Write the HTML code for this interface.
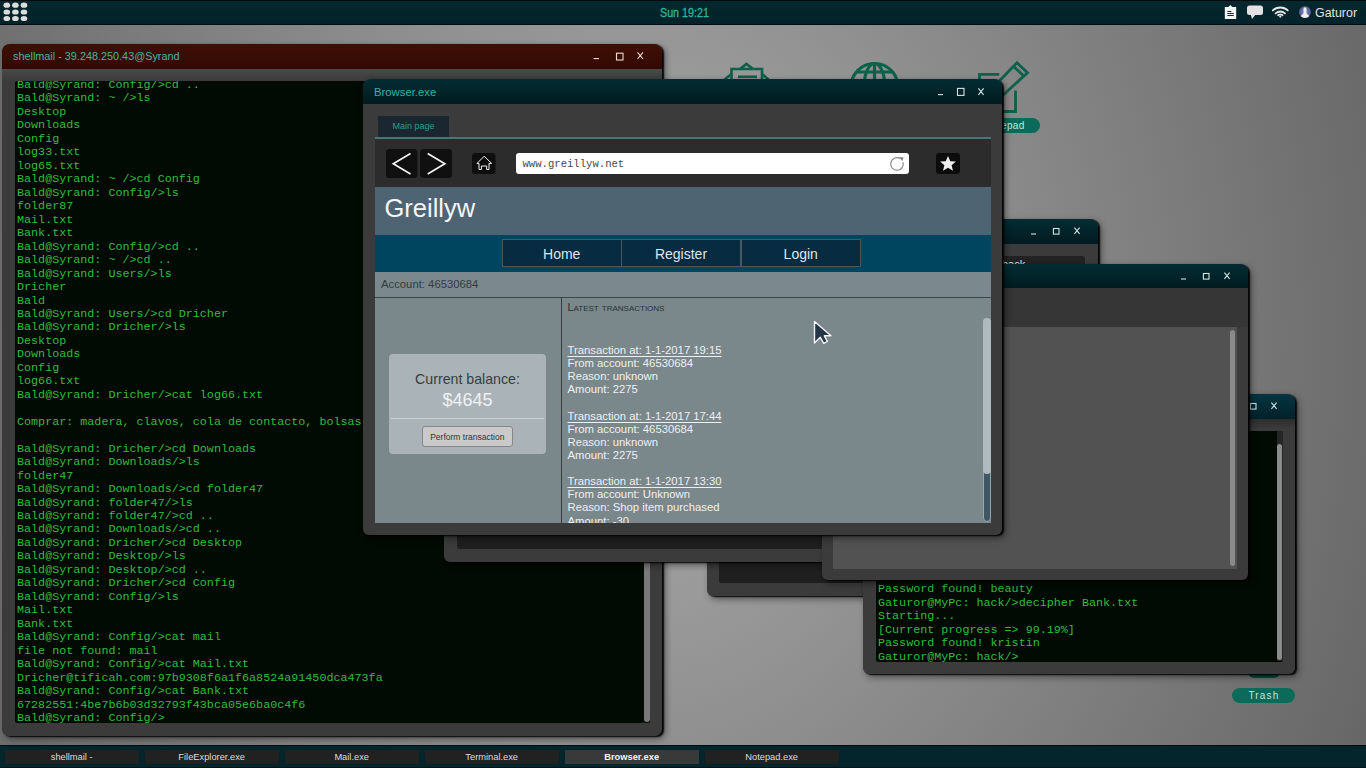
<!DOCTYPE html>
<html><head><meta charset="utf-8">
<style>
*{margin:0;padding:0;box-sizing:border-box}
html,body{width:1366px;height:768px;overflow:hidden}
body{position:relative;font-family:"Liberation Sans",sans-serif;
background:radial-gradient(800px 1000px at 640px 340px,#acacac 0%,#666666 100%)}
.abs{position:absolute}
#topbar{left:0;top:0;width:1366px;height:25px;background:linear-gradient(#03282e,#022329);border-top:1px solid #000a0d;border-bottom:1px solid #000d10}
#taskbar{left:0;top:744.5px;width:1366px;height:23.5px;background:#03252b;border-top:1px solid #000c10;border-bottom:1px solid #001418}
.tb{position:absolute;top:4.3px;width:134px;height:14.2px;background:#212121;color:#dcdcdc;font-size:9.3px;line-height:15px;text-align:center}
.tb.act{background:#393939;font-weight:bold;color:#f4f4f4}
.win{position:absolute;background:#3b3b3b;border-radius:8px 8px 6px 6px;box-shadow:2px 1px 1.5px rgba(0,0,0,.95),3px 3px 7px rgba(0,0,0,.45)}
.title{position:absolute;left:0;top:0;right:0;height:25px;border-radius:8px 8px 0 0;background:linear-gradient(#042c33,#021b1f)}
.title.red{background:linear-gradient(#3f0f05,#320a03)}
.ttext{position:absolute;left:11px;top:6px;font-size:11px;color:#3fb5a5;white-space:pre}
.ctl{position:absolute;top:0;right:0;width:72px;height:25px}
.term{position:absolute;background:#010a03;overflow:hidden;border-radius:2px}
.term pre{position:absolute;left:2px;font-family:"Liberation Mono",monospace;font-size:11.73px;line-height:13.47px;color:#30be3c;white-space:pre}
.icon{position:absolute}
.nav{background:#072b40;border:1px solid #4a585c;color:#dfe6ea;font-size:14px;line-height:28px;text-align:center}
.tx{font-size:11.3px;line-height:13.12px;color:#eef0f2;white-space:pre}
.tx u{text-decoration-thickness:1px;text-underline-offset:2px}
</style></head><body>

<!-- desktop icons -->
<svg class="icon" style="left:715px;top:58px" width="62" height="24" viewBox="0 0 62 24">
 <g fill="none" stroke="#0b6149" stroke-width="2.6">
  <path d="M16.5 24 V11 H47 V24"/>
  <path d="M25 11 L31.5 6 L38 11"/>
  <path d="M16.5 16 L9 22 M47 16 L54 22"/>
 </g>
 <rect x="23" y="17.5" width="19" height="2.6" fill="#0b6149"/>
</svg>
<svg class="icon" style="left:845px;top:58px" width="62" height="24" viewBox="0 0 62 24">
 <g fill="none" stroke="#0b6149" stroke-width="3.2">
  <circle cx="29.5" cy="29" r="23.5"/>
  <ellipse cx="29.5" cy="29" rx="10.5" ry="23.5"/>
  <path d="M29.5 5 V24 M11.5 14 H47.5"/>
 </g>
</svg>
<svg class="icon" style="left:970px;top:58px" width="64" height="58" viewBox="0 0 64 58">
 <g fill="none" stroke="#0b6149" stroke-width="2.8">
  <path d="M29.3 16.4 H9.5 V53.5 H45.5 V32.4"/>
  <path d="M47 4.8 L57.5 14.7 L34.3 36 L24 38 L28.8 23.6 Z"/>
  <path d="M43.6 8.4 L54.1 18.3"/>
 </g>
</svg>
<div class="abs" style="left:969px;top:118px;width:71px;height:14.5px;border-radius:8px;background:#0b6a5a;color:#c4ebe0;font-size:10px;line-height:15px;text-align:center;letter-spacing:0.4px">Notepad</div>

<div class="abs" style="left:1232px;top:688px;width:63px;height:15px;border-radius:8px;background:#0b6a5a;color:#bfe9dc;font-size:10px;line-height:15px;text-align:center;letter-spacing:1.2px;padding-left:1px">Trash</div>
<div class="abs" style="left:1248px;top:668px;width:32px;height:10px;border-radius:0 0 6px 6px;background:#064a3a"></div>

<!-- top bar -->
<div id="topbar" class="abs">
 <svg class="abs" style="left:2px;top:0px" width="30" height="22" viewBox="0 0 30 22">
  <g fill="#dcdcdc">
   <ellipse cx="4.8" cy="4.2" rx="3.3" ry="2.6"/><ellipse cx="13.4" cy="4.2" rx="3.3" ry="2.6"/><ellipse cx="22" cy="4.2" rx="3.3" ry="2.6"/>
   <ellipse cx="4.8" cy="11" rx="3.3" ry="2.6"/><ellipse cx="13.4" cy="11" rx="3.3" ry="2.6"/><ellipse cx="22" cy="11" rx="3.3" ry="2.6"/>
   <ellipse cx="4.8" cy="17.5" rx="3.3" ry="2.6"/><ellipse cx="13.4" cy="17.5" rx="3.3" ry="2.6"/><ellipse cx="22" cy="17.5" rx="3.3" ry="2.6"/>
  </g>
 </svg>
 <div class="abs" style="left:659.6px;top:4.6px;font-size:12.2px;color:#2bb59f;-webkit-text-stroke:0.3px #2bb59f;transform:scaleX(.88);transform-origin:0 0;white-space:pre">Sun 19:21</div>
 <svg class="abs" style="left:1224px;top:3px" width="14" height="16" viewBox="0 0 14 16">
  <path d="M0.8 3 H4.4 L6.3 1 L8.4 3 H12.2 V15 H0.8 Z" fill="#f4f4f4"/>
  <path d="M3.4 7.5 H7.4 M3.4 9.5 H9.8 M3.4 11.5 H9.8" stroke="#152326" stroke-width="1.1"/>
 </svg>
 <svg class="abs" style="left:1246px;top:4px" width="18" height="15" viewBox="0 0 18 15">
  <path d="M3.5 0.6 H14.5 Q17 0.6 17 3.1 V7.6 Q17 10.1 14.5 10.1 H9.2 L6 14 L4.8 10.1 H3.5 Q1 10.1 1 7.6 V3.1 Q1 0.6 3.5 0.6Z" fill="#e2e2e2"/>
 </svg>
 <svg class="abs" style="left:1271px;top:4px" width="19" height="14" viewBox="0 0 19 14">
  <g fill="none" stroke="#e6e6e6" stroke-width="1.8" stroke-linecap="round">
   <path d="M1.8 5.45 A11 11 0 0 1 16.8 5.45"/>
   <path d="M4.6 8.3 A7 7 0 0 1 14 8.3"/>
   <path d="M7.06 10.18 A4 4 0 0 1 11.54 10.18"/>
  </g>
  <circle cx="9.3" cy="11.6" r="1.1" fill="#e6e6e6"/>
 </svg>
 <svg class="abs" style="left:1298px;top:4px" width="14" height="14" viewBox="0 0 14 14">
  <defs><radialGradient id="ug" cx="50%" cy="50%" r="55%"><stop offset="0" stop-color="#8890c0"/><stop offset="0.7" stop-color="#5c6494"/><stop offset="1" stop-color="#3e4670"/></radialGradient></defs>
  <circle cx="7" cy="7" r="6.1" fill="url(#ug)"/>
  <path d="M5.4 4.2 Q5.4 2.2 7 2.2 Q8.6 2.2 8.6 4.2 L8.4 7.2 Q8.3 8.6 9.5 9.2 Q11 10 11.2 11.2 Q9.5 13 7 13 Q4.5 13 2.8 11.2 Q3 10 4.5 9.2 Q5.7 8.6 5.6 7.2 Z" fill="#ececf2"/>
 </svg>
 <div class="abs" style="left:1315px;top:4.6px;font-size:12.4px;color:#e2e2e2;white-space:pre">Gaturor</div>
</div>

<!-- shellmail window -->
<div class="win" id="shell" style="left:2px;top:44px;width:660px;height:692px;border-radius:8px 8px 7px 7px">
 <div class="title red"><div class="ttext" style="left:11px;color:#45b5a7;font-size:10.85px">shellmail - 39.248.250.43@Syrand</div><svg class="ctl" width="72" height="25" viewBox="0 0 72 25"><g stroke="#eedcd4" stroke-width="1.1" fill="none"><path d="M3.5 14.6 H9"/><rect x="26.5" y="9.2" width="6.5" height="6.8"/><path d="M47.5 8.3 L53 15 M53 8.3 L47.5 15"/></g></svg></div>
 <div class="abs" style="left:0;top:25px;width:660px;height:12px;background:linear-gradient(#4a4a4a,#3b3b3b)"></div>
 <div class="term" style="left:13px;top:36.5px;width:629px;height:642px">
<pre style="top:-1.5px">Bald@Syrand: Config/&gt;cd ..
Bald@Syrand: ~ /&gt;ls
Desktop
Downloads
Config
log33.txt
log65.txt
Bald@Syrand: ~ /&gt;cd Config
Bald@Syrand: Config/&gt;ls
folder87
Mail.txt
Bank.txt
Bald@Syrand: Config/&gt;cd ..
Bald@Syrand: ~ /&gt;cd ..
Bald@Syrand: Users/&gt;ls
Dricher
Bald
Bald@Syrand: Users/&gt;cd Dricher
Bald@Syrand: Dricher/&gt;ls
Desktop
Downloads
Config
log66.txt
Bald@Syrand: Dricher/&gt;cat log66.txt

Comprar: madera, clavos, cola de contacto, bolsas de basura

Bald@Syrand: Dricher/&gt;cd Downloads
Bald@Syrand: Downloads/&gt;ls
folder47
Bald@Syrand: Downloads/&gt;cd folder47
Bald@Syrand: folder47/&gt;ls
Bald@Syrand: folder47/&gt;cd ..
Bald@Syrand: Downloads/&gt;cd ..
Bald@Syrand: Dricher/&gt;cd Desktop
Bald@Syrand: Desktop/&gt;ls
Bald@Syrand: Desktop/&gt;cd ..
Bald@Syrand: Dricher/&gt;cd Config
Bald@Syrand: Config/&gt;ls
Mail.txt
Bank.txt
Bald@Syrand: Config/&gt;cat mail
file not found: mail
Bald@Syrand: Config/&gt;cat Mail.txt
Dricher@tificah.com:97b9308f6a1f6a8524a91450dca473fa
Bald@Syrand: Config/&gt;cat Bank.txt
67282551:4be7b6b03d32793f43bca05e6ba0c4f6
Bald@Syrand: Config/&gt;</pre>
 </div>
 <div class="abs" style="left:642px;top:36.5px;width:6px;height:642px;background:#0a0f0b"></div>
 <div class="abs" style="left:642px;top:40px;width:6px;height:638px;border-radius:3px;background:#7a7a7a"></div>
</div>


<!-- window E -->
<div class="win" style="left:707px;top:300px;width:500px;height:295.5px">
 <div class="title"></div>
 <div class="abs" style="left:12px;top:40px;width:476px;height:242.5px;background:#1f1f1f;border-radius:2px"></div>
</div>

<!-- window A (FileExplorer) -->
<div class="win" style="left:444px;top:219px;width:654px;height:343px">
 <div class="title"><svg class="ctl" width="72" height="25" viewBox="0 0 72 25"><g stroke="#d3e3e3" stroke-width="1.1" fill="none"><path d="M5 15 H10"/><rect x="27.4" y="9.5" width="5.6" height="5.6"/><path d="M48.4 8.7 L53.6 14.8 M53.6 8.7 L48.4 14.8"/></g></svg></div>
 <div class="abs" style="left:13px;top:37px;width:628px;height:19px;background:#222;border-radius:3px;overflow:hidden"><div class="abs" style="left:545px;top:1.5px;font-size:11px;color:#e8e8e8">hack</div></div>
 <div class="abs" style="left:13px;top:60px;width:628px;height:270px;background:#1f1f1f;border-radius:2px"></div>
</div>

<!-- window C (Terminal) -->
<div class="win" style="left:863px;top:394px;width:432px;height:280px">
 <div class="title" style="background:linear-gradient(#043541,#02222a)"><svg class="ctl" width="72" height="25" viewBox="0 0 72 25"><g stroke="#d3e3e3" stroke-width="1.1" fill="none"><path d="M5 15 H10"/><rect x="27.4" y="9.5" width="5.6" height="5.6"/><path d="M48.4 8.7 L53.6 14.8 M53.6 8.7 L48.4 14.8"/></g></svg></div>
 <div class="abs" style="left:0;top:25px;width:432px;height:10px;background:linear-gradient(#2e2e2e,#3b3b3b)"></div>
 <div class="term" style="left:13px;top:37px;width:407px;height:231px">
<pre style="top:111.8px;left:2px">Gaturor@MyPc: hack/&gt;decipher Mail.txt
Starting...

Password found! beauty
Gaturor@MyPc: hack/&gt;decipher Bank.txt
Starting...
[Current progress =&gt; 99.19%]
Password found! kristin
Gaturor@MyPc: hack/&gt;</pre>
 </div>
 <div class="abs" style="left:414px;top:37px;width:6px;height:230px;background:#262626"></div>
 <div class="abs" style="left:414px;top:50px;width:5px;height:216px;border-radius:3px;background:#8c8c8c"></div>
</div>

<!-- window B (Mail) -->
<div class="win" style="left:822px;top:264px;width:426px;height:316px">
 <div class="title"><svg class="ctl" width="72" height="25" viewBox="0 0 72 25"><g stroke="#d3e3e3" stroke-width="1.1" fill="none"><path d="M5 15 H10"/><rect x="27.4" y="9.5" width="5.6" height="5.6"/><path d="M48.4 8.7 L53.6 14.8 M53.6 8.7 L48.4 14.8"/></g></svg></div>
 <div class="abs" style="left:0;top:24px;width:426px;height:39px;background:#363636"></div>
 <div class="abs" style="left:11px;top:63px;width:404px;height:242px;background:#525252"></div>
 <div class="abs" style="left:408px;top:66px;width:5px;height:236px;border-radius:3px;background:#8a8a8a"></div>
</div>


<!-- Browser -->
<div class="win" style="left:363px;top:79px;width:639px;height:456px;border-radius:8px 8px 6px 6px">
 <div class="title" style="height:24.5px"><div class="ttext" style="left:11px;top:6.5px;color:#35b3a2;font-size:11.3px">Browser.exe</div>
  <svg class="ctl" width="72" height="25" viewBox="0 0 72 25"><g stroke="#d3e3e3" stroke-width="1.1" fill="none"><path d="M8 15.6 H13"/><rect x="27.5" y="9.4" width="6.5" height="7"/><path d="M48.4 9.3 L53.6 15.9 M53.6 9.3 L48.4 15.9"/></g></svg>
 </div>
 <!-- tab -->
 <div class="abs" style="left:15px;top:37px;width:71px;height:20.5px;background:#1a2630"><div class="abs" style="left:0;top:4.5px;width:71px;text-align:center;font-size:9px;color:#2c9d8c">Main page</div></div>
 <div class="abs" style="left:12px;top:58px;width:616px;height:2px;background:#3f7b72"></div>
 <!-- toolbar -->
 <div class="abs" style="left:12px;top:60px;width:616px;height:47.5px;background:#2c2c2c">
  <svg class="abs" style="left:11px;top:10px" width="66" height="29" viewBox="0 0 66 29">
   <rect x="0" y="0" width="31.5" height="29" rx="3.5" fill="#101010"/>
   <rect x="34" y="0" width="32" height="29" rx="3.5" fill="#101010"/>
   <path d="M24.5 4.6 L7.3 14.75 L24.5 24.9" fill="none" stroke="#f4f4f4" stroke-width="1.7"/>
   <path d="M41.7 4.6 L58.8 14.75 L41.7 24.9" fill="none" stroke="#f4f4f4" stroke-width="1.7"/>
  </svg>
  <svg class="abs" style="left:97px;top:14px" width="24" height="21" viewBox="0 0 24 21">
   <rect x="0" y="0" width="23.5" height="21" rx="3" fill="#0e0e0e"/>
   <path d="M7 16.5 V10.4 H5 L12.2 3.2 L19.6 10.4 H17 V16.5 H14.7 V13 H9.4 V16.5 Z" fill="none" stroke="#f2f2f2" stroke-width="1"/>
  </svg>
  <div class="abs" style="left:141px;top:14px;width:393px;height:21px;background:#fff;border-radius:3px">
   <div class="abs" style="left:6.5px;top:5px;font-family:'Liberation Mono',monospace;font-size:10.6px;color:#4a4a4a">www.greillyw.net</div>
   <svg class="abs" style="left:373px;top:2.5px" width="16" height="16" viewBox="0 0 16 16">
    <path d="M14.1 6.4 A6.3 6.3 0 1 1 11.4 2.7" fill="none" stroke="#808080" stroke-width="1.1"/>
    <path d="M10.6 0.9 L14.6 1.5 L13.2 5.2 Z" fill="#808080"/>
   </svg>
  </div>
  <svg class="abs" style="left:561px;top:14px" width="24" height="21" viewBox="0 0 24 21">
   <rect x="0" y="0" width="24" height="21" rx="3" fill="#0c0c0c"/>
   <path d="M12 3 L14.3 8.2 L19.9 8.6 L15.6 12.2 L17 17.7 L12 14.7 L7 17.7 L8.4 12.2 L4.1 8.6 L9.7 8.2 Z" fill="#eeeeee"/>
  </svg>
 </div>
 <!-- page -->
 <div class="abs" style="left:12px;top:107.5px;width:616px;height:336.5px;background:#7a878b;overflow:hidden">
  <div class="abs" style="left:0;top:0;width:616px;height:48px;background:#4e6472">
   <div class="abs" style="left:9.5px;top:7.7px;font-size:25.5px;color:#f4f6f8;white-space:pre">Greillyw</div>
  </div>
  <div class="abs" style="left:0;top:48px;width:616px;height:37px;background:#00455f">
   <div class="abs nav" style="left:127px;top:4px;width:119.5px;height:28.5px">Home</div>
   <div class="abs nav" style="left:246px;top:4px;width:120px;height:28.5px">Register</div>
   <div class="abs nav" style="left:366px;top:4px;width:119.5px;height:28.5px">Login</div>
  </div>
  <div class="abs" style="left:0;top:85px;width:616px;height:26.5px;background:#7b898e;border-bottom:1px solid #3d474b">
   <div class="abs" style="left:6px;top:6.5px;font-size:11.3px;color:#333b3f;white-space:pre">Account: 46530684</div>
  </div>
  <div class="abs" style="left:186px;top:110px;width:1px;height:230px;background:#353d41"></div>
  <!-- balance card -->
  <div class="abs" style="left:14px;top:167.5px;width:157px;height:100px;background:#aab4b8;border-radius:4px">
   <div class="abs" style="left:0;top:16.5px;width:157px;text-align:center;font-size:14.2px;color:#363d41">Current balance:</div>
   <div class="abs" style="left:0;top:35.7px;width:157px;text-align:center;font-size:18px;color:#eef2f4">$4645</div>
   <div class="abs" style="left:2px;top:63.5px;width:153px;height:1px;background:#cbd3d6"></div>
   <div class="abs" style="left:32.8px;top:71.8px;width:91px;height:21.5px;background:#cacaca;border:1px solid #878787;border-radius:3px;font-size:8.5px;line-height:20px;text-align:center;color:#333">Perform transaction</div>
  </div>
  <!-- transactions -->
  <div class="abs" style="left:192.5px;top:114.5px;font-size:10.9px;font-variant:small-caps;color:#2a3236;white-space:pre">Latest transactions</div>
  <div class="abs tx" style="left:192.5px;top:144.3px">
<u>Transaction at: 1-1-2017 19:15</u>
From account: 46530684
Reason: unknown
Amount: 2275

<u>Transaction at: 1-1-2017 17:44</u>
From account: 46530684
Reason: unknown
Amount: 2275

<u>Transaction at: 1-1-2017 13:30</u>
From account: Unknown
Reason: Shop item purchased
Amount: -30
</div>
  <div class="abs" style="left:608px;top:131.5px;width:7.5px;height:204px;border-radius:4px;background:#3f5762;border:1px solid #9aa6ab"></div>
  <div class="abs" style="left:608px;top:131.5px;width:7.5px;height:156px;border-radius:4px;background:#b0babe"></div>
 </div>
</div>

<!-- cursor -->
<svg class="abs" style="left:812px;top:319px" width="22" height="28" viewBox="0 0 22 28">
 <path d="M2.5 2.5 V24 L8.3 18.3 L11.7 24.3 L15.4 22.4 L12.3 16.8 H19 Z" fill="#253545" stroke="#f4f4f4" stroke-width="1.4" stroke-linejoin="round"/>
</svg>

<!-- taskbar -->
<div id="taskbar" class="abs">
 <div class="tb" style="left:4.7px">shellmail -</div>
 <div class="tb" style="left:144.7px">FileExplorer.exe</div>
 <div class="tb" style="left:284.7px">Mail.exe</div>
 <div class="tb" style="left:424.7px">Terminal.exe</div>
 <div class="tb act" style="left:564.7px">Browser.exe</div>
 <div class="tb" style="left:704.7px">Notepad.exe</div>
</div>

</body></html>
